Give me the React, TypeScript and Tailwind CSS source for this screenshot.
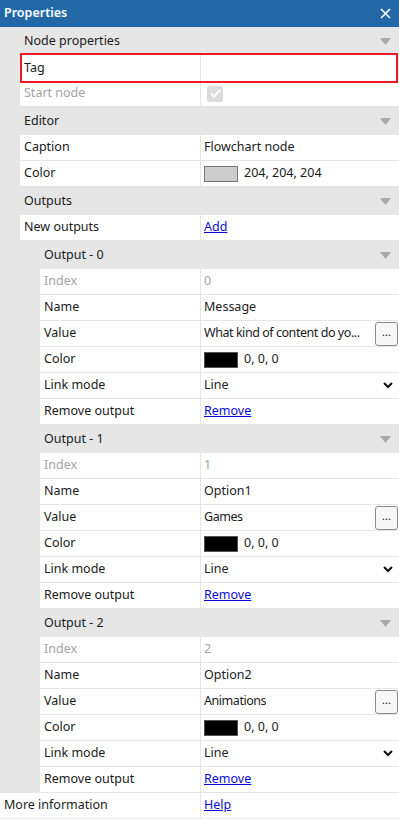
import React from 'react';

const Triangle = () => (
  <svg width="11" height="7" viewBox="0 0 11 7" className="mr-[8px]">
    <path d="M0 0 L11 0 L5.5 7 Z" fill="#a9a9a9" />
  </svg>
);

const Category = ({ indent, label }: { indent: number; label: string }) => (
  <div className={`flex h-[28px] items-center justify-between bg-[#e6e6e6] ${indent === 40 ? 'pl-[44px]' : 'pl-[24px]'}`}>
    <span>{label}</span>
    <Triangle />
  </div>
);

const Row = ({
  indent,
  label,
  disabled,
  children,
}: {
  indent: number;
  label: string;
  disabled?: boolean;
  children?: React.ReactNode;
}) => (
  <div className="flex h-[26px] bg-[#e6e6e6]">
    {indent === 40 && <div className="w-[40px] shrink-0" />}
    {indent === 20 && <div className="w-[20px] shrink-0" />}
    <div className="flex min-w-0 flex-1 border-b border-[#e6e6e6] bg-white">
      <div
        className={`flex shrink-0 items-center pl-[4px] ${indent === 40 ? 'w-[160px]' : indent === 20 ? 'w-[180px]' : 'w-[200px]'} ${disabled ? 'text-[#a3a3a3]' : ''}`}
      >
        {label}
      </div>
      <div className="flex min-w-0 flex-1 items-center border-l border-[#e6e6e6] pl-[3px]">{children}</div>
    </div>
  </div>
);

const Swatch = ({ color, text }: { color: string; text: string }) => (
  <div className="flex items-center gap-[6px]">
    <div className={`h-[16px] w-[34px] border ${color}`} />
    <span>{text}</span>
  </div>
);

const DotsButton = () => (
  <div className="ml-auto mr-[1px] flex h-[24px] w-[23px] shrink-0 items-center justify-center rounded-[3px] border border-[#8a8a8a] bg-[#f7f7f7] pb-[4px] text-[11px] leading-none">
    ...
  </div>
);

const LinkSelect = () => (
  <div className="flex w-full items-center justify-between pr-[6px]">
    <span>Line</span>
    <svg width="10" height="7" viewBox="0 0 10 7">
      <path d="M1 1 L5 5 L9 1" stroke="#111" strokeWidth="2" fill="none" />
    </svg>
  </div>
);

const Link = ({ children }: { children: React.ReactNode }) => (
  <span className="text-[#0a0ad8] underline">{children}</span>
);

const OutputGroup = ({ n, name, value }: { n: number; name: string; value: string }) => (
  <>
    <Category indent={40} label={`Output - ${n}`} />
    <Row indent={40} label="Index" disabled>
      <span className="text-[#a3a3a3]">{n}</span>
    </Row>
    <Row indent={40} label="Name">
      {name}
    </Row>
    <Row indent={40} label="Value">
      <span className="min-w-0 overflow-hidden whitespace-nowrap tracking-[-0.45px]">{value}</span>
      <DotsButton />
    </Row>
    <Row indent={40} label="Color">
      <Swatch color="bg-black border-[#555]" text="0, 0, 0" />
    </Row>
    <Row indent={40} label="Link mode">
      <LinkSelect />
    </Row>
    <Row indent={40} label="Remove output">
      <Link>Remove</Link>
    </Row>
  </>
);

export default function App() {
  return (
    <div className="h-[819px] w-[399px] overflow-hidden bg-[#e6e6e6] text-[12.5px] text-[#1b1b1b] [font-family:'Noto_Sans','Open_Sans',sans-serif]">
      <div className="flex h-[27px] items-center justify-between bg-[#2368a6] pl-[4px] pr-[8px] text-[12.5px] font-semibold text-white">
        <span>Properties</span>
        <svg width="11" height="11" viewBox="0 0 11 11">
          <path d="M1 1 L10 10 M10 1 L1 10" stroke="white" strokeWidth="1.6" />
        </svg>
      </div>
      <Category indent={20} label="Node properties" />
      <div className="relative z-10 -my-[2px] flex h-[30px] bg-[#e6e6e6]">
        <div className="w-[20px] shrink-0" />
        <div className="mr-[1px] flex flex-1 border-2 border-[#ec1c24] bg-white">
          <div className="flex w-[178px] items-center pl-[2px]">Tag</div>
          <div className="flex-1 border-l border-[#e6e6e6]" />
        </div>
      </div>
      <Row indent={20} label="Start node" disabled>
        <div className="ml-[3px] flex h-[16px] w-[16px] items-center justify-center rounded-[2px] bg-[#dcdcdc]">
          <svg width="11" height="9" viewBox="0 0 11 9">
            <path d="M1 4.5 L4 7.5 L10 1" stroke="white" strokeWidth="2" fill="none" />
          </svg>
        </div>
      </Row>
      <Category indent={20} label="Editor" />
      <Row indent={20} label="Caption">
        Flowchart node
      </Row>
      <Row indent={20} label="Color">
        <Swatch color="bg-[#cccccc] border-[#777]" text="204, 204, 204" />
      </Row>
      <Category indent={20} label="Outputs" />
      <Row indent={20} label="New outputs">
        <Link>Add</Link>
      </Row>
      <OutputGroup n={0} name="Message" value="What kind of content do yo..." />
      <OutputGroup n={1} name="Option1" value="Games" />
      <OutputGroup n={2} name="Option2" value="Animations" />
      <Row indent={0} label="More information">
        <Link>Help</Link>
      </Row>
    </div>
  );
}
